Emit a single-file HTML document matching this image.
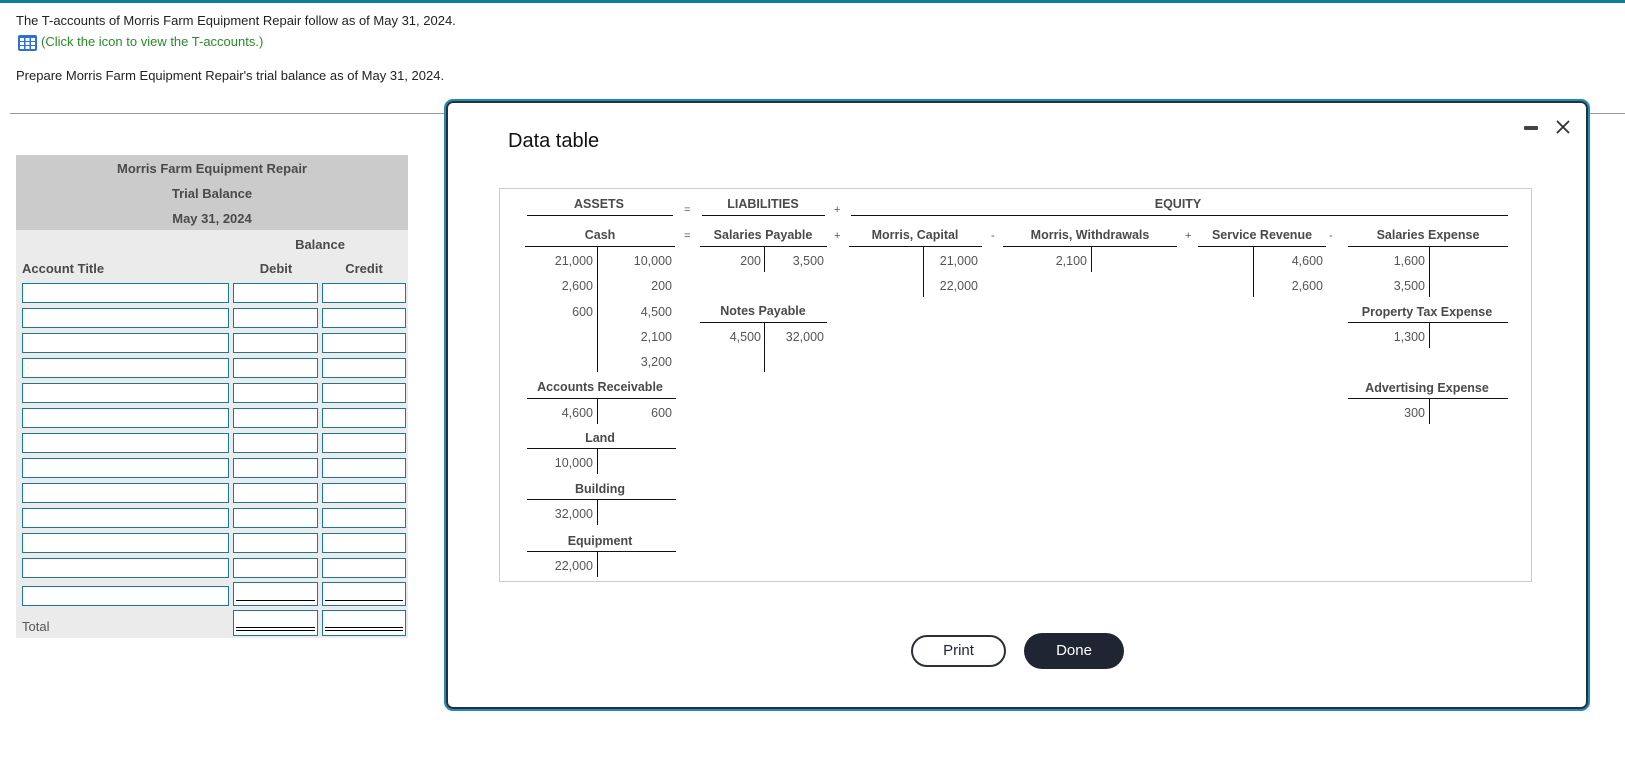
<!DOCTYPE html>
<html><head><meta charset="utf-8"><style>
*{margin:0;padding:0;box-sizing:border-box}
body{width:1625px;height:760px;position:relative;overflow:hidden;background:#fff;font-family:"Liberation Sans",Arial,sans-serif;color:#222}
.a{position:absolute;white-space:nowrap}
.c{position:absolute;text-align:center;white-space:nowrap;line-height:16px;transform:translateX(-50%)}
.h{font-size:12.5px;font-weight:bold;color:#4a4a4a}
.n{position:absolute;font-size:12.5px;color:#555;line-height:16px;text-align:right;white-space:nowrap}
.ln{position:absolute;height:1px;background:#111}
.vl{position:absolute;width:1px;background:#111}
.in{position:absolute;height:20px;border:1.5px solid #1a7896;background:#fff}
.op{position:absolute;font-size:11px;color:#555;line-height:12px}
</style></head><body>
<div class="a" style="left:0;top:0;width:1625px;height:3px;background:#0e7c9b"></div>
<div class="a" style="left:16px;top:13px;font-size:13px;line-height:16px">The T-accounts of Morris Farm Equipment Repair follow as of May 31, 2024.</div>
<svg class="a" style="left:18px;top:35px" width="19" height="16" viewBox="0 0 19 16"><rect x="0" y="0" width="19" height="16" rx="2" fill="#2f6fd6"/><g fill="#fff"><rect x="2" y="3" width="4" height="3"/><rect x="7.5" y="3" width="4" height="3"/><rect x="13" y="3" width="4" height="3"/><rect x="2" y="7" width="4" height="3"/><rect x="7.5" y="7" width="4" height="3"/><rect x="13" y="7" width="4" height="3"/><rect x="2" y="11" width="4" height="3"/><rect x="7.5" y="11" width="4" height="3"/><rect x="13" y="11" width="4" height="3"/></g></svg>
<div class="a" style="left:41px;top:34px;font-size:13px;line-height:16px;color:#2a8a2a">(Click the icon to view the T-accounts.)</div>
<div class="a" style="left:16px;top:68px;font-size:13px;line-height:16px">Prepare Morris Farm Equipment Repair's trial balance as of May 31, 2024.</div>
<div class="a" style="left:10px;top:113px;width:1615px;height:1px;background:#999"></div>

<div class="a" style="left:16px;top:155px;width:392px;height:75px;background:#cbcbcb"></div>
<div class="a" style="left:16px;top:230px;width:392px;height:408px;background:#ebebeb"></div>
<div class="c h" style="left:212px;top:161px;font-size:13px">Morris Farm Equipment Repair</div>
<div class="c h" style="left:212px;top:186px;font-size:13px">Trial Balance</div>
<div class="c h" style="left:212px;top:211px;font-size:13px">May 31, 2024</div>
<div class="c h" style="left:320px;top:237px;font-size:13px">Balance</div>
<div class="a h" style="left:22px;top:261px;font-size:13px;line-height:16px">Account Title</div>
<div class="c h" style="left:276px;top:261px;font-size:13px">Debit</div>
<div class="c h" style="left:364px;top:261px;font-size:13px">Credit</div>
<div class="a" style="left:22px;top:619px;font-size:13px;line-height:16px;color:#555">Total</div>
<div id="rows"></div>

<div class="a" style="left:444px;top:99px;width:1146px;height:612px;border:2px solid #1a8bc4;border-radius:9px"></div>
<div class="a" style="left:446px;top:101px;width:1142px;height:608px;border:2px solid #2e2e2e;border-radius:7px;background:#fff"></div>
<div class="a" style="left:508px;top:128px;font-size:20px;line-height:26px;color:#111">Data table</div>
<div class="a" style="left:1524px;top:126px;width:14px;height:4px;background:#444;border-radius:1px"></div>
<svg class="a" style="left:1555px;top:119px" width="16" height="16" viewBox="0 0 16 16"><path d="M2 2L14 14M14 2L2 14" stroke="#333" stroke-width="1.8"/></svg>

<div class="a" style="left:499px;top:188px;width:1033px;height:394px;border:1px solid #ccc"></div>

<div class="c h" style="left:599px;top:196px">ASSETS</div>
<div class="ln" style="left:527px;top:215px;width:146px"></div>
<div class="op" style="left:684px;top:204px">=</div>
<div class="c h" style="left:763px;top:196px">LIABILITIES</div>
<div class="ln" style="left:702px;top:215px;width:123px"></div>
<div class="op" style="left:834px;top:204px">+</div>
<div class="c h" style="left:1178px;top:196px">EQUITY</div>
<div class="ln" style="left:851px;top:215px;width:657px"></div>

<div class="c h" style="left:600px;top:227px">Cash</div>
<div class="ln" style="left:525px;top:246px;width:150px"></div>
<div class="op" style="left:684px;top:230px">=</div>
<div class="c h" style="left:763px;top:227px">Salaries Payable</div>
<div class="ln" style="left:700px;top:246px;width:127px"></div>
<div class="op" style="left:834px;top:230px">+</div>
<div class="c h" style="left:915px;top:227px">Morris, Capital</div>
<div class="ln" style="left:849px;top:246px;width:133px"></div>
<div class="op" style="left:991px;top:230px">-</div>
<div class="c h" style="left:1090px;top:227px">Morris, Withdrawals</div>
<div class="ln" style="left:1003px;top:246px;width:174px"></div>
<div class="op" style="left:1185px;top:230px">+</div>
<div class="c h" style="left:1262px;top:227px">Service Revenue</div>
<div class="ln" style="left:1198px;top:246px;width:128px"></div>
<div class="op" style="left:1329px;top:230px">-</div>
<div class="c h" style="left:1428px;top:227px">Salaries Expense</div>
<div class="ln" style="left:1348px;top:246px;width:160px"></div>

<div class="vl" style="left:597px;top:246px;height:126px"></div>
<div class="n" style="right:1032px;top:253px">21,000</div><div class="n" style="right:953px;top:253px">10,000</div>
<div class="n" style="right:1032px;top:278px">2,600</div><div class="n" style="right:953px;top:278px">200</div>
<div class="n" style="right:1032px;top:304px">600</div><div class="n" style="right:953px;top:304px">4,500</div>
<div class="n" style="right:953px;top:329px">2,100</div>
<div class="n" style="right:953px;top:354px">3,200</div>
<div class="vl" style="left:764px;top:246px;height:26px"></div>
<div class="n" style="right:864px;top:253px">200</div><div class="n" style="right:801px;top:253px">3,500</div>
<div class="c h" style="left:763px;top:303px">Notes Payable</div>
<div class="ln" style="left:700px;top:322px;width:127px"></div>
<div class="vl" style="left:764px;top:322px;height:50px"></div>
<div class="n" style="right:864px;top:329px">4,500</div><div class="n" style="right:801px;top:329px">32,000</div>
<div class="vl" style="left:923px;top:246px;height:51px"></div>
<div class="n" style="right:647px;top:253px">21,000</div>
<div class="n" style="right:647px;top:278px">22,000</div>
<div class="vl" style="left:1091px;top:246px;height:26px"></div>
<div class="n" style="right:538px;top:253px">2,100</div>
<div class="vl" style="left:1253px;top:246px;height:51px"></div>
<div class="n" style="right:302px;top:253px">4,600</div>
<div class="n" style="right:302px;top:278px">2,600</div>
<div class="vl" style="left:1429px;top:246px;height:51px"></div>
<div class="n" style="right:200px;top:253px">1,600</div>
<div class="n" style="right:200px;top:278px">3,500</div>
<div class="c h" style="left:1427px;top:304px">Property Tax Expense</div>
<div class="ln" style="left:1348px;top:322px;width:160px"></div>
<div class="vl" style="left:1429px;top:322px;height:26px"></div>
<div class="n" style="right:200px;top:329px">1,300</div>
<div class="c h" style="left:1427px;top:380px">Advertising Expense</div>
<div class="ln" style="left:1348px;top:398px;width:160px"></div>
<div class="vl" style="left:1429px;top:398px;height:26px"></div>
<div class="n" style="right:200px;top:405px">300</div>
<div class="c h" style="left:600px;top:379px">Accounts Receivable</div>
<div class="ln" style="left:527px;top:398px;width:149px"></div>
<div class="vl" style="left:597px;top:398px;height:26px"></div>
<div class="n" style="right:1032px;top:405px">4,600</div><div class="n" style="right:953px;top:405px">600</div>
<div class="c h" style="left:600px;top:430px">Land</div>
<div class="ln" style="left:527px;top:448px;width:149px"></div>
<div class="vl" style="left:597px;top:448px;height:26px"></div>
<div class="n" style="right:1032px;top:455px">10,000</div>
<div class="c h" style="left:600px;top:481px">Building</div>
<div class="ln" style="left:527px;top:499px;width:149px"></div>
<div class="vl" style="left:597px;top:499px;height:26px"></div>
<div class="n" style="right:1032px;top:506px">32,000</div>
<div class="c h" style="left:600px;top:533px">Equipment</div>
<div class="ln" style="left:527px;top:551px;width:149px"></div>
<div class="vl" style="left:597px;top:551px;height:26px"></div>
<div class="n" style="right:1032px;top:558px">22,000</div>

<div class="a" style="left:911px;top:635px;width:95px;height:32px;border:2px solid #2a2f3a;border-radius:16px;text-align:center;line-height:28px;font-size:15px;color:#1e2430">Print</div>
<div class="a" style="left:1024px;top:633px;width:100px;height:36px;background:#1f2532;border-radius:18px;text-align:center;line-height:36px;font-size:15px;color:#fff">Done</div>

<script>
var h='';
for(var i=0;i<12;i++){var t=283+i*25;
 h+='<div class="in" style="left:22px;top:'+t+'px;width:207px"></div>';
 h+='<div class="in" style="left:233px;top:'+t+'px;width:85px"></div><div class="in" style="left:322px;top:'+t+'px;width:84px"></div>';
}
h+='<div class="in" style="left:22px;top:586px;width:207px"></div>';
h+='<div class="in" style="left:233px;top:582px;width:85px;height:24px"><div style="position:absolute;left:2px;right:2px;top:17px;height:1px;background:#000"></div></div>';
h+='<div class="in" style="left:322px;top:582px;width:84px;height:24px"><div style="position:absolute;left:2px;right:2px;top:17px;height:1px;background:#000"></div></div>';
h+='<div class="in" style="left:233px;top:610px;width:85px;height:26px"><div style="position:absolute;left:2px;right:2px;top:16px;height:4px;border-top:1px solid #000;border-bottom:1px solid #000"></div></div>';
h+='<div class="in" style="left:322px;top:610px;width:84px;height:26px"><div style="position:absolute;left:2px;right:2px;top:16px;height:4px;border-top:1px solid #000;border-bottom:1px solid #000"></div></div>';
document.getElementById('rows').innerHTML=h;
</script>
</body></html>
